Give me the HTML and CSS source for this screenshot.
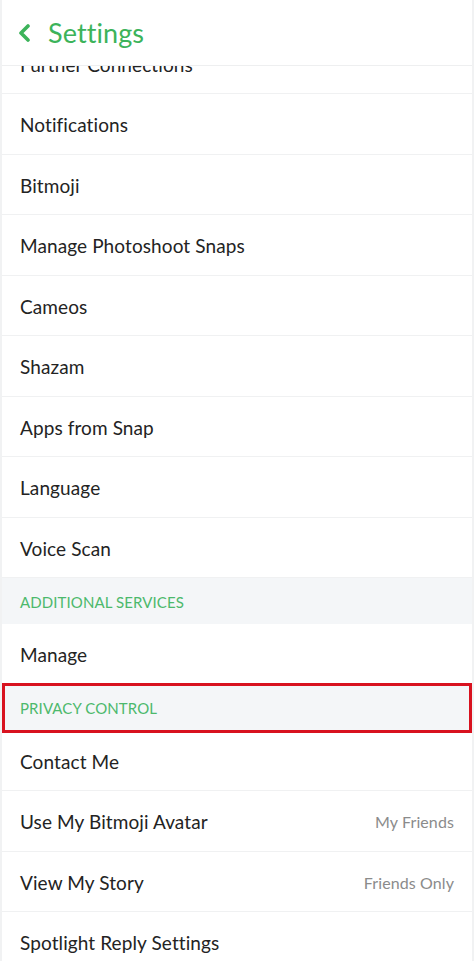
FILE: index.html
```html
<!DOCTYPE html>
<html lang="en">
<head>
  <meta charset="UTF-8" />
  <meta name="viewport" content="width=device-width, initial-scale=1.0" />
  <title>Settings</title>
  <link rel="stylesheet" href="styles.css">
</head>
<body>
  <div class="screen">
    <header class="top-bar">
      <svg class="back" width="16" height="18" viewBox="0 0 16 18" aria-hidden="true">
        <path d="M11 2 L4 9 L11 16" fill="none" stroke="#3cb35a" stroke-width="3.6" stroke-linecap="round" stroke-linejoin="round" />
      </svg>
      <div class="title">Settings</div>
    </header>
    <div class="list">
      <div class="row first">Further Connections</div>
      <div class="row">Notifications</div>
      <div class="row">Bitmoji</div>
      <div class="row">Manage Photoshoot Snaps</div>
      <div class="row">Cameos</div>
      <div class="row">Shazam</div>
      <div class="row">Apps from Snap</div>
      <div class="row">Language</div>
      <div class="row">Voice Scan</div>
      <div class="section">ADDITIONAL SERVICES</div>
      <div class="row">Manage</div>
      <div class="section highlight">PRIVACY CONTROL</div>
      <div class="row">Contact Me</div>
      <div class="row"><span>Use My Bitmoji Avatar</span><span class="value">My Friends</span></div>
      <div class="row"><span>View My Story</span><span class="value">Friends Only</span></div>
      <div class="row">Spotlight Reply Settings</div>
    </div>
  </div>
</body>
</html>
```

FILE: styles.css
```css
body {
  margin: 0;
  background: #ffffff;
  font-family: Lato, "Open Sans", sans-serif;
  color: #232323;
}
.screen {
  height: 961px;
  overflow: hidden;
  border-left: 2px solid #f1f2f3;
  border-right: 2px solid #f1f2f3;
  box-sizing: border-box;
}
.top-bar {
  height: 66px;
  box-sizing: border-box;
  display: flex;
  align-items: center;
  gap: 15px;
  padding: 0 0 0 15px;
  border-bottom: 1px solid #eeeff0;
  background: #fff;
  position: relative;
  z-index: 1;
}
.back {
  margin-top: 1px;
}
.title {
  font-size: 27px;
  color: #3cb35a;
  letter-spacing: 0.1px;
}
.list {
  overflow: hidden;
}
.row {
  height: 60.5px;
  box-sizing: border-box;
  display: flex;
  align-items: center;
  justify-content: space-between;
  padding: 2px 18px 0 18px;
  font-size: 19px;
  letter-spacing: 0.1px;
  border-bottom: 1px solid #f0f1f2;
}
.row.first {
  margin-top: -32.5px;
}
.value {
  font-size: 16px;
  color: #8b8b8b;
}
.section {
  height: 46px;
  box-sizing: border-box;
  display: flex;
  align-items: center;
  padding: 1px 18px 0;
  background: #f4f6f8;
  color: #4cb96c;
  font-size: 15px;
  letter-spacing: 0.1px;
}
.section.highlight {
  outline: 3px solid #d8121f;
  outline-offset: -1px;
  margin: 0 2px;
  padding-left: 16px;
}
```
